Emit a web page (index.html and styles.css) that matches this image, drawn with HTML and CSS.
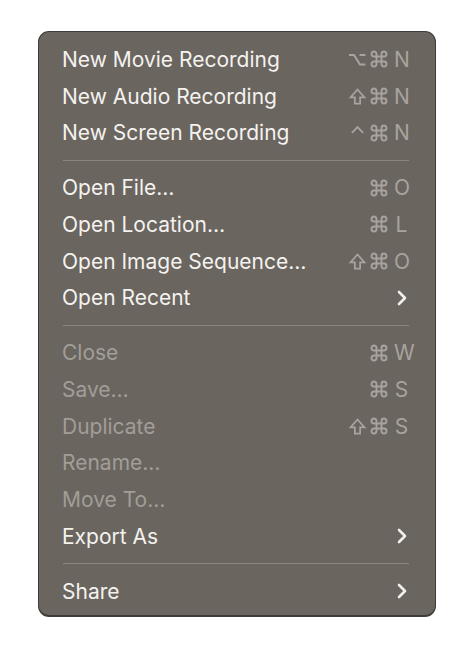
FILE: index.html
```html
<!DOCTYPE html>
<html>
<head>
<meta charset="utf-8">
<link rel="stylesheet" href="styles.css">
</head>
<body>
<div class="menu">
  <div class="row"><span class="label">New Movie Recording</span><span class="keys"><svg class="k k-opt" viewBox="0 0 18 13"><path d="M1 2h5l6 9.5h5.5M11.5 2h6"/></svg><svg class="k k-cmd" viewBox="0 0 24 24"><path d="M15 6v12a3 3 0 1 0 3-3H6a3 3 0 1 0 3 3V6a3 3 0 1 0-3 3h12a3 3 0 1 0-3-3"/></svg><span class="letter">N</span></span></div>
  <div class="row"><span class="label">New Audio Recording</span><span class="keys"><svg class="k k-shift" viewBox="0 0 24 24"><path d="M9 20v-7H4l8-9 8 9h-5v7H9z"/></svg><svg class="k k-cmd" viewBox="0 0 24 24"><path d="M15 6v12a3 3 0 1 0 3-3H6a3 3 0 1 0 3 3V6a3 3 0 1 0-3 3h12a3 3 0 1 0-3-3"/></svg><span class="letter">N</span></span></div>
  <div class="row"><span class="label">New Screen Recording</span><span class="keys"><svg class="k k-ctrl" viewBox="0 0 16 12"><path d="M2 9l6-6 6 6"/></svg><svg class="k k-cmd" viewBox="0 0 24 24"><path d="M15 6v12a3 3 0 1 0 3-3H6a3 3 0 1 0 3 3V6a3 3 0 1 0-3 3h12a3 3 0 1 0-3-3"/></svg><span class="letter">N</span></span></div>
  <div class="sep"></div>
  <div class="row"><span class="label">Open File…</span><span class="keys"><svg class="k k-cmd" viewBox="0 0 24 24"><path d="M15 6v12a3 3 0 1 0 3-3H6a3 3 0 1 0 3 3V6a3 3 0 1 0-3 3h12a3 3 0 1 0-3-3"/></svg><span class="letter">O</span></span></div>
  <div class="row"><span class="label">Open Location…</span><span class="keys"><svg class="k k-cmd" viewBox="0 0 24 24"><path d="M15 6v12a3 3 0 1 0 3-3H6a3 3 0 1 0 3 3V6a3 3 0 1 0-3 3h12a3 3 0 1 0-3-3"/></svg><span class="letter">L</span></span></div>
  <div class="row"><span class="label">Open Image Sequence…</span><span class="keys"><svg class="k k-shift" viewBox="0 0 24 24"><path d="M9 20v-7H4l8-9 8 9h-5v7H9z"/></svg><svg class="k k-cmd" viewBox="0 0 24 24"><path d="M15 6v12a3 3 0 1 0 3-3H6a3 3 0 1 0 3 3V6a3 3 0 1 0-3 3h12a3 3 0 1 0-3-3"/></svg><span class="letter">O</span></span></div>
  <div class="row"><span class="label">Open Recent</span><svg class="chev" viewBox="0 0 12 16"><path d="M3 2l6 6-6 6"/></svg></div>
  <div class="sep"></div>
  <div class="row disabled"><span class="label">Close</span><span class="keys"><svg class="k k-cmd" viewBox="0 0 24 24"><path d="M15 6v12a3 3 0 1 0 3-3H6a3 3 0 1 0 3 3V6a3 3 0 1 0-3 3h12a3 3 0 1 0-3-3"/></svg><span class="letter">W</span></span></div>
  <div class="row disabled"><span class="label">Save…</span><span class="keys"><svg class="k k-cmd" viewBox="0 0 24 24"><path d="M15 6v12a3 3 0 1 0 3-3H6a3 3 0 1 0 3 3V6a3 3 0 1 0-3 3h12a3 3 0 1 0-3-3"/></svg><span class="letter">S</span></span></div>
  <div class="row disabled"><span class="label">Duplicate</span><span class="keys"><svg class="k k-shift" viewBox="0 0 24 24"><path d="M9 20v-7H4l8-9 8 9h-5v7H9z"/></svg><svg class="k k-cmd" viewBox="0 0 24 24"><path d="M15 6v12a3 3 0 1 0 3-3H6a3 3 0 1 0 3 3V6a3 3 0 1 0-3 3h12a3 3 0 1 0-3-3"/></svg><span class="letter">S</span></span></div>
  <div class="row disabled"><span class="label">Rename…</span></div>
  <div class="row disabled"><span class="label">Move To…</span></div>
  <div class="row"><span class="label">Export As</span><svg class="chev" viewBox="0 0 12 16"><path d="M3 2l6 6-6 6"/></svg></div>
  <div class="sep"></div>
  <div class="row"><span class="label">Share</span><svg class="chev" viewBox="0 0 12 16"><path d="M3 2l6 6-6 6"/></svg></div>
</div>
</body>
</html>
```
FILE: styles.css
```css
html, body {
  margin: 0;
  padding: 0;
  background: #ffffff;
}
body {
  padding: 31px 0 0 38px;
  font-family: Inter, "Liberation Sans", sans-serif;
}
.menu {
  box-sizing: border-box;
  width: 398px;
  height: 586px;
  background: #6a655f;
  border: 1px solid #3f3c38;
  border-bottom-width: 2px;
  border-radius: 11px;
  padding: 9px 26px 0 23px;
}
.row {
  height: 36.7px;
  display: flex;
  align-items: center;
  justify-content: space-between;
  font-size: 21px;
  color: #f4f2ef;
}
.row.disabled .label {
  color: #a29d98;
}
.keys {
  display: flex;
  align-items: center;
  color: #a8a39e;
}
.k {
  fill: none;
  stroke: #a8a39e;
  stroke-width: 2;
  stroke-linecap: butt;
  stroke-linejoin: miter;
}
.k-cmd {
  width: 20px;
  height: 20px;
  stroke-width: 2.3;
  margin-right: 5px;
}
.k-opt {
  width: 18px;
  height: 13px;
  margin-right: 3px;
}
.k-shift {
  width: 21px;
  height: 21px;
  stroke-width: 2;
  margin-right: 1px;
}
.k-ctrl {
  width: 15px;
  height: 12px;
  margin-right: 4px;
  margin-top: -6px;
}
.letter {
  font-size: 21px;
  width: 15px;
  text-align: center;
}
.chev {
  width: 12px;
  height: 16px;
  fill: none;
  stroke: #f2f0ed;
  stroke-width: 2.6;
  stroke-linecap: round;
  stroke-linejoin: round;
  margin-right: 1px;
}
.sep {
  height: 1px;
  background: #8a857f;
  margin: 8.6px 0 8.7px 1px;
}
```
